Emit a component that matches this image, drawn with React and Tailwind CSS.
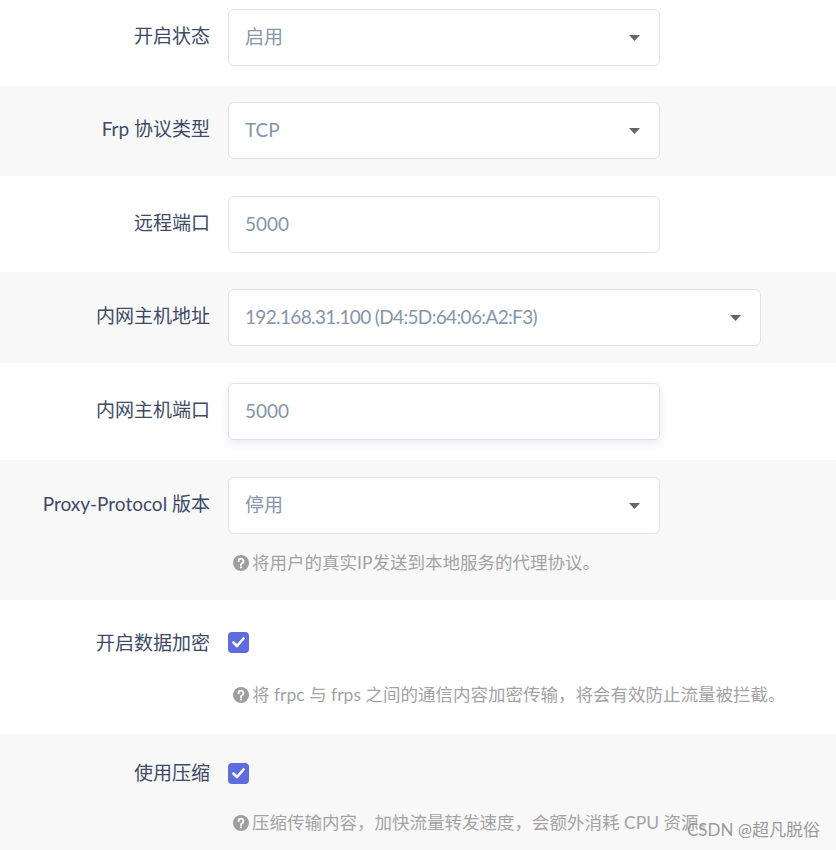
import React from "react";

const font = { fontFamily: "Lato, 'Noto Sans CJK SC', sans-serif" };

function Caret() {
  return (
    <svg width="11" height="6" viewBox="0 0 11 6" className="shrink-0">
      <path d="M0 0h11L5.5 6z" fill="#666" />
    </svg>
  );
}

function Select({ value, wide, tight }) {
  return (
    <div
      className={`flex items-center justify-between h-[57px] rounded-[6px] border border-[#e1e2e8] bg-white pl-4 pr-[19px] ${
        wide ? "w-[533px]" : "w-[432px]"
      }`}
    >
      <span className={`text-[19px] text-[#8595ad] ${tight ? "tracking-[-0.65px]" : ""}`}>{value}</span>
      <Caret />
    </div>
  );
}

function Input({ value, focused }) {
  return (
    <div
      className={`flex items-center h-[57px] w-[432px] rounded-[6px] border border-[#e1e2e8] bg-white pl-4 ${
        focused ? "shadow-[0_3px_10px_rgba(120,130,200,0.18)]" : ""
      }`}
    >
      <span className="text-[19px] text-[#8595ad]">{value}</span>
    </div>
  );
}

function Checkbox() {
  return (
    <div className="flex items-center justify-center w-[21px] h-[21px] rounded-[4px] bg-[#5d6de0]">
      <svg width="13" height="11" viewBox="0 0 13 11">
        <path d="M1.5 5.5l3.5 3.5 6.5-7.5" stroke="#fff" strokeWidth="2.6" fill="none" strokeLinecap="round" strokeLinejoin="round" />
      </svg>
    </div>
  );
}

function Help({ children }) {
  return (
    <div className="flex items-center gap-[3px] pl-[5px] text-[17.5px] text-[#a3a3a3]">
      <svg width="16" height="16" viewBox="0 0 16 16" className="shrink-0">
        <circle cx="8" cy="8" r="8" fill="#9e9e9e" />
        <path d="M5.6 6.2a2.4 2.4 0 1 1 3.4 2.1c-.7.3-1 .7-1 1.3v.4" stroke="#fff" strokeWidth="1.8" fill="none" strokeLinecap="round" />
        <circle cx="8" cy="12.4" r="1.1" fill="#fff" />
      </svg>
      <span>{children}</span>
    </div>
  );
}

function Row({ label, gray, className, children, labelTop }) {
  return (
    <div className={`flex ${gray ? "bg-[#f8f8f8]" : "bg-white"} ${className}`}>
      <div
        className={`w-[210px] shrink-0 text-right text-[19px] text-[#3e4a66] ${labelTop}`}
      >
        {label}
      </div>
      <div className="ml-[18px] flex flex-col">{children}</div>
    </div>
  );
}

export default function App() {
  return (
    <div className="relative w-[836px] h-[850px] overflow-hidden bg-white" style={font}>
      <Row label="开启状态" className="h-[86px] pt-[9px]" labelTop="pt-[13px]">
        <Select value="启用" />
      </Row>
      <Row label="Frp 协议类型" gray className="h-[90px] pt-[16px]" labelTop="pt-[13px]">
        <Select value="TCP" />
      </Row>
      <Row label="远程端口" className="h-[96px] pt-[20px]" labelTop="pt-[13px]">
        <Input value="5000" />
      </Row>
      <Row label="内网主机地址" gray className="h-[91px] pt-[17px]" labelTop="pt-[13px]">
        <Select value="192.168.31.100 (D4:5D:64:06:A2:F3)" wide tight />
      </Row>
      <Row label="内网主机端口" className="h-[97px] pt-[20px]" labelTop="pt-[13px]">
        <Input value="5000" focused />
      </Row>
      <Row label="Proxy-Protocol 版本" gray className="h-[140px] pt-[17px]" labelTop="pt-[13px]">
        <Select value="停用" />
        <div className="mt-[16px]">
          <Help>将用户的真实IP发送到本地服务的代理协议。</Help>
        </div>
      </Row>
      <Row label="开启数据加密" className="h-[134px] pt-[32px]" labelTop="-mt-[3px]">
        <Checkbox />
        <div className="mt-[29px]">
          <Help>将 frpc 与 frps 之间的通信内容加密传输，将会有效防止流量被拦截。</Help>
        </div>
      </Row>
      <Row label="使用压缩" gray className="h-[116px] pt-[29px]" labelTop="-mt-[4px]">
        <Checkbox />
        <div className="mt-[26px]">
          <Help>压缩传输内容，加快流量转发速度，会额外消耗 CPU 资源。</Help>
        </div>
      </Row>
      <div className="absolute right-[16px] bottom-[8px] text-[17px] text-[#9a9a9a]">
        CSDN @超凡脱俗
      </div>
    </div>
  );
}
